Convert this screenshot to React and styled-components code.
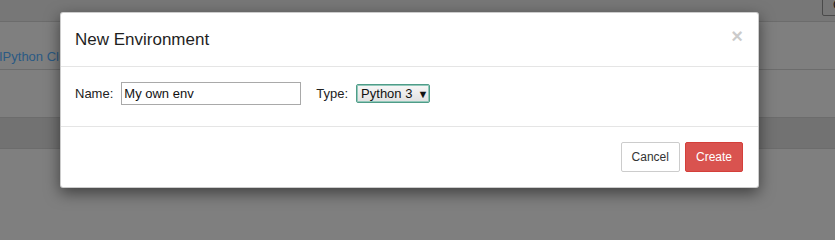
import React from 'react';
import styled, { createGlobalStyle } from 'styled-components';

const GlobalStyle = createGlobalStyle`
  html, body {
    margin: 0;
    padding: 0;
    background: #7f7f7f;
    overflow: hidden;
  }
  * {
    box-sizing: border-box;
  }
`;

// page behind the backdrop, painted already dimmed
const Page = styled.div`
  position: relative;
  width: 835px;
  height: 224px;
  overflow: hidden;
  background: #7f7f7f;
  font-family: "Liberation Sans", Arial, sans-serif;
  font-size: 13px;
`;

const TopBar = styled.div`
  height: 22px;
  background: #777777;
  border-bottom: 1px solid #6c6c6c;
  display: flex;
  justify-content: flex-end;
`;

const HeaderButton = styled.div`
  margin-top: -10px;
  margin-right: -80px;
  height: 26px;
  width: 93px;
  padding: 6px 10px;
  border: 1px solid #4a4a4a;
  border-radius: 2px;
  color: #1a1a1a;
  font-size: 13px;
  white-space: nowrap;
`;

const Row = styled.div`
  height: ${p => p.h}px;
  background: ${p => (p.shade ? '#727272' : 'transparent')};
  border-bottom: 1px solid #6c6c6c;
  padding: ${p => p.pad || 0}px 0 0 0;
`;

const PageLink = styled.span`
  color: #2b5a84;
  font-size: 13px;
  margin-left: -1px;
  white-space: nowrap;
`;

const Modal = styled.div`
  position: absolute;
  left: 60px;
  top: 12px;
  width: 699px;
  background: #fff;
  border: 1px solid rgba(0, 0, 0, 0.2);
  border-radius: 3px;
  box-shadow: 0 5px 15px rgba(0, 0, 0, 0.5);
  color: #333;
`;

const ModalHeader = styled.div`
  display: flex;
  justify-content: space-between;
  align-items: flex-start;
  padding: 15px 15px 14px 14px;
  border-bottom: 1px solid #e5e5e5;
`;

const Title = styled.h4`
  margin: 0;
  font-size: 17px;
  font-weight: 400;
  line-height: 24px;
  color: #1f1f1f;
`;

const Close = styled.button`
  border: 0;
  background: none;
  padding: 0;
  margin-top: -2px;
  font-family: "Liberation Sans", Arial, sans-serif;
  font-size: 20px;
  font-weight: 700;
  line-height: 1;
  color: #000;
  opacity: 0.2;
`;

const ModalBody = styled.div`
  display: flex;
  align-items: center;
  padding: 15px 15px 21px 14px;
`;

const Label = styled.label`
  font-size: 13px;
  color: #222;
  margin-right: 8px;
  margin-left: ${p => p.gap || 0}px;
`;

const TextInput = styled.input`
  width: 180px;
  height: 23px;
  border: 1px solid #a9a9a9;
  padding: 1px 2px;
  font-family: "Liberation Sans", Arial, sans-serif;
  font-size: 13px;
  color: #111;
  outline: none;
`;

const Select = styled.div`
  display: flex;
  align-items: center;
  gap: 5px;
  width: 74px;
  height: 19px;
  padding: 0 4px;
  border: 1px solid #4f9c88;
  box-shadow: inset 0 0 0 1px #93c9bb;
  border-radius: 2px;
  background: linear-gradient(#f7f7f7, #e1e1e1);
  font-size: 13px;
  color: #111;
  white-space: nowrap;
`;

const Caret = styled.span`
  font-size: 11px;
  color: #111;
`;

const ModalFooter = styled.div`
  display: flex;
  justify-content: flex-end;
  gap: 5px;
  padding: 15px;
  border-top: 1px solid #e5e5e5;
`;

const Button = styled.button`
  height: 30px;
  padding: 0 10px;
  border: 1px solid ${p => (p.danger ? '#d43f3a' : '#cccccc')};
  border-radius: 2px;
  background: ${p => (p.danger ? '#d9534f' : '#fff')};
  color: ${p => (p.danger ? '#fff' : '#333')};
  font-family: "Liberation Sans", Arial, sans-serif;
  font-size: 12px;
`;

export default function App() {
  return (
    <>
      <GlobalStyle />
      <Page>
        <TopBar>
          <HeaderButton>Control Panel</HeaderButton>
        </TopBar>
        <Row h={48} pad={27}>
          <PageLink>IPython Clusters</PageLink>
        </Row>
        <Row h={48} />
        <Row h={31} shade />

        <Modal>
          <ModalHeader>
            <Title>New Environment</Title>
            <Close>×</Close>
          </ModalHeader>
          <ModalBody>
            <Label>Name:</Label>
            <TextInput defaultValue="My own env" />
            <Label gap={15}>Type:</Label>
            <Select>
              Python 3 <Caret>▼</Caret>
            </Select>
          </ModalBody>
          <ModalFooter>
            <Button>Cancel</Button>
            <Button danger>Create</Button>
          </ModalFooter>
        </Modal>
      </Page>
    </>
  );
}
